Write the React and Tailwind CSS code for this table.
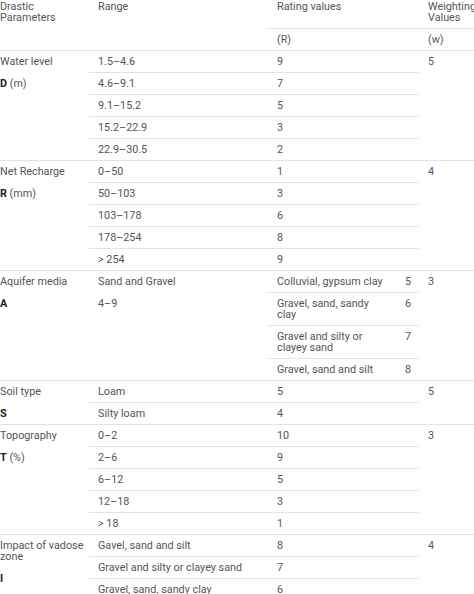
const groups = [
  {
    name: ["Water level"],
    code: "D",
    unit: " (m)",
    weight: "5",
    rows: [
      ["1.5–4.6", "9"],
      ["4.6–9.1", "7"],
      ["9.1–15.2", "5"],
      ["15.2–22.9", "3"],
      ["22.9–30.5", "2"],
    ],
  },
  {
    name: ["Net Recharge"],
    code: "R",
    unit: " (mm)",
    weight: "4",
    rows: [
      ["0–50", "1"],
      ["50–103", "3"],
      ["103–178", "6"],
      ["178–254", "8"],
      ["> 254", "9"],
    ],
  },
];

const groups2 = [
  {
    name: ["Soil type"],
    code: "S",
    unit: "",
    weight: "5",
    rows: [
      ["Loam", "5"],
      ["Silty loam", "4"],
    ],
  },
  {
    name: ["Topography"],
    code: "T",
    unit: " (%)",
    weight: "3",
    rows: [
      ["0–2", "10"],
      ["2–6", "9"],
      ["6–12", "5"],
      ["12–18", "3"],
      ["> 18", "1"],
    ],
  },
  {
    name: ["Impact of vadose", "zone"],
    code: "I",
    unit: "",
    weight: "4",
    rows: [
      ["Gavel, sand and silt", "8"],
      ["Gravel and silty or clayey sand", "7"],
      ["Gravel, sand, sandy clay", "6"],
    ],
  },
];

const aquifer = [
  [["Colluvial, gypsum clay"], "5"],
  [["Gravel, sand, sandy", "clay"], "6"],
  [["Gravel and silty or", "clayey sand"], "7"],
  [["Gravel, sand and silt"], "8"],
];

const td = "align-top px-[9px] py-[5px] whitespace-nowrap";
const line = "border-t border-[#e3e3e3]";

function ParamCell({ g, span }) {
  return (
    <td rowSpan={span} className={`${td} ${line}`}>
      <div className="flex flex-col gap-[11px]">
        <div>
          {g.name.map((n) => (
            <div key={n}>{n}</div>
          ))}
        </div>
        <div>
          <b className="font-bold text-[#222]">{g.code}</b>
          {g.unit}
        </div>
      </div>
    </td>
  );
}

function Group({ g }) {
  return g.rows.map((r, i) => (
    <tr key={r[0]}>
      {i === 0 && <ParamCell g={g} span={g.rows.length} />}
      <td className={`${td} ${line}`}>{r[0]}</td>
      <td colSpan={2} className={`${td} ${line}`}>
        {r[1]}
      </td>
      {i === 0 && (
        <td rowSpan={g.rows.length} className={`${td} ${line}`}>
          {g.weight}
        </td>
      )}
    </tr>
  ));
}

export default function App() {
  return (
    <div className="w-[474px] h-[594px] overflow-hidden bg-white">
      <table
        className="table-fixed border-collapse w-[508px] -ml-[9px] -mt-[4px] text-[10.8px] leading-[11px] text-[#555555] text-left"
        style={{ fontFamily: "Roboto, 'Liberation Sans', sans-serif" }}
      >
        <colgroup>
          <col className="w-[98px]" />
          <col className="w-[179px]" />
          <col className="w-[128px]" />
          <col className="w-[23px]" />
          <col className="w-[80px]" />
        </colgroup>
        <thead>
          <tr>
            <th rowSpan={2} className={`${td} font-normal`}>
              Drastic
              <br />
              Parameters
            </th>
            <th rowSpan={2} className={`${td} font-normal`}>
              Range
            </th>
            <th colSpan={2} className={`${td} font-normal`}>
              Rating values
            </th>
            <th className={`${td} font-normal`}>
              Weighting
              <br />
              Values
            </th>
          </tr>
          <tr>
            <th colSpan={2} className={`${td} ${line} font-normal`}>
              (R)
            </th>
            <th className={`${td} ${line} font-normal`}>(w)</th>
          </tr>
        </thead>
        <tbody>
          {groups.map((g) => (
            <Group key={g.code} g={g} />
          ))}
          {aquifer.map((r, i) => (
            <tr key={r[1]}>
              {i === 0 && (
                <>
                  <ParamCell
                    g={{ name: ["Aquifer media"], code: "A", unit: "" }}
                    span={4}
                  />
                  <td rowSpan={4} className={`${td} ${line}`}>
                    <div className="flex flex-col gap-[11px]">
                      <div>Sand and Gravel</div>
                      <div>4–9</div>
                    </div>
                  </td>
                </>
              )}
              <td className={`${td} ${line}`}>
                {r[0].map((t) => (
                  <div key={t}>{t}</div>
                ))}
              </td>
              <td className={`${td} ${line}`}>{r[1]}</td>
              {i === 0 && (
                <td rowSpan={4} className={`${td} ${line}`}>
                  3
                </td>
              )}
            </tr>
          ))}
          {groups2.map((g) => (
            <Group key={g.code} g={g} />
          ))}
        </tbody>
      </table>
    </div>
  );
}
